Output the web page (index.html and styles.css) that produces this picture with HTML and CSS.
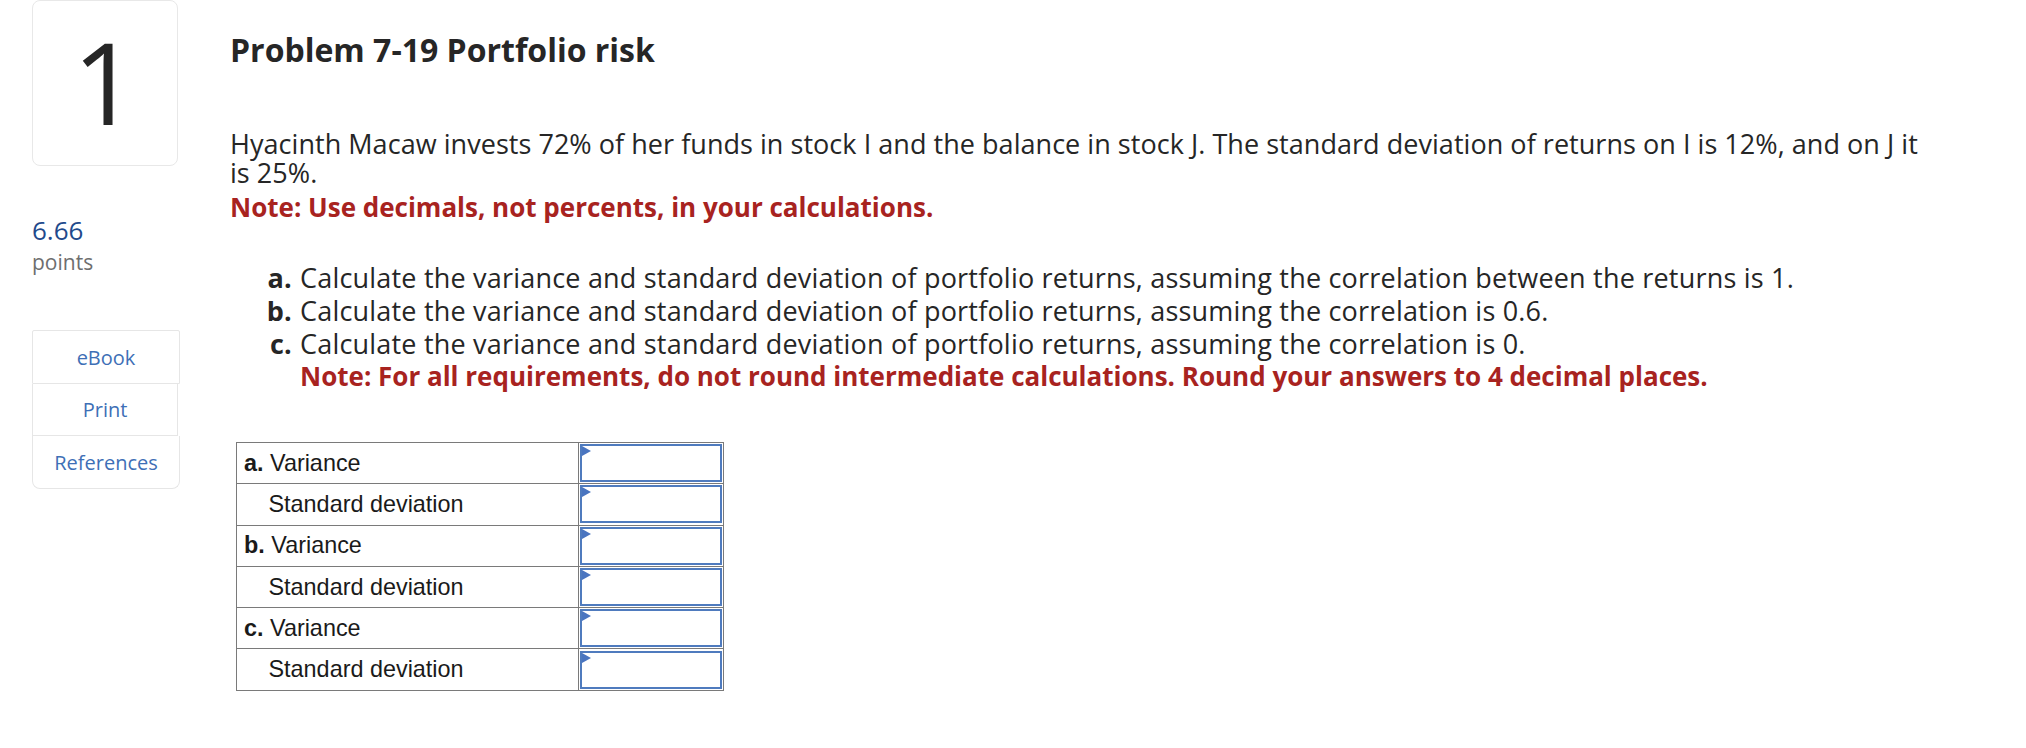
FILE: index.html
```html
<!DOCTYPE html>
<html lang="en">
<head>
<meta charset="utf-8">
<title>Problem 7-19 Portfolio risk</title>
<link rel="stylesheet" href="styles.css">
</head>
<body>
<div class="page">
  <aside class="side">
    <div class="qnum">1</div>
    <div class="points">
      <div class="points-val">6.66</div>
      <div class="points-lbl">points</div>
    </div>
    <nav class="tools">
      <a class="tool tool-first">eBook</a>
      <a class="tool tool-mid">Print</a>
      <a class="tool tool-last">References</a>
    </nav>
  </aside>
  <main class="main">
    <h1 class="title">Problem 7-19 Portfolio risk</h1>
    <p class="intro">Hyacinth Macaw invests 72% of her funds in stock I and the balance in stock J. The standard deviation of returns on I is 12%, and on J it<br>is 25%.</p>
    <p class="note note-block">Note: Use decimals, not percents, in your calculations.</p>
    <ol class="reqs">
      <li><b class="lbl">a.</b><span>Calculate the variance and standard deviation of portfolio returns, assuming the correlation between the returns is 1.</span></li>
      <li><b class="lbl">b.</b><span>Calculate the variance and standard deviation of portfolio returns, assuming the correlation is 0.6.</span></li>
      <li><b class="lbl">c.</b><span>Calculate the variance and standard deviation of portfolio returns, assuming the correlation is 0.</span></li>
      <li><span class="lbl"></span><strong class="note">Note: For all requirements, do not round intermediate calculations. Round your answers to 4 decimal places.</strong></li>
    </ol>
    <table class="answers">
      <tr><td class="cell-lbl"><b>a.</b> Variance</td><td class="cell-in"><div class="inbox"></div></td></tr>
      <tr><td class="cell-lbl indent">Standard deviation</td><td class="cell-in"><div class="inbox"></div></td></tr>
      <tr><td class="cell-lbl"><b>b.</b> Variance</td><td class="cell-in"><div class="inbox"></div></td></tr>
      <tr><td class="cell-lbl indent">Standard deviation</td><td class="cell-in"><div class="inbox"></div></td></tr>
      <tr><td class="cell-lbl"><b>c.</b> Variance</td><td class="cell-in"><div class="inbox"></div></td></tr>
      <tr><td class="cell-lbl indent">Standard deviation</td><td class="cell-in"><div class="inbox"></div></td></tr>
    </table>
  </main>
</div>
</body>
</html>
```

FILE: styles.css
```css
* { box-sizing: border-box; }
html, body { margin: 0; padding: 0; background: #fff; }
body {
  font-family: "Open Sans", "Liberation Sans", sans-serif;
  color: #262626;
  width: 2026px;
  height: 748px;
  overflow: hidden;
}
.page {
  display: flex;
  gap: 50px;
  padding-left: 32px;
}
.side {
  width: 148px;
  flex: none;
  display: flex;
  flex-direction: column;
}
.qnum {
  width: 146px;
  height: 166px;
  border: 1px solid #e8e8e8;
  border-radius: 8px;
  display: flex;
  align-items: center;
  justify-content: center;
  font-family: "Open Sans", sans-serif;
  font-weight: 500;
  font-size: 114px;
  line-height: 1.3;
  color: #262626;
  padding-bottom: 4px;
}
.points { margin-top: 48px; }
.points-val {
  font-size: 26px;
  line-height: 32px;
  color: #1f4a8c;
}
.points-lbl {
  margin-top: 3px;
  font-size: 21px;
  line-height: 26px;
  color: #6e6e6e;
}
.tools {
  margin-top: 55px;
  display: flex;
  flex-direction: column;
}
.tool {
  display: flex;
  align-items: center;
  justify-content: center;
  height: 52px;
  border: 1px solid #e6e6e6;
  border-top: none;
  font-size: 20px;
  color: #3e6fb6;
  width: 148px;
}
.tool-first { border-top: 1px solid #e6e6e6; height: 54px; border-radius: 2px 2px 0 0; }
.tool-mid { width: 146px; }
.tool-last { height: 53px; border-radius: 0 0 8px 8px; }
.main {
  flex: 1;
  min-width: 0;
}
.title {
  margin: 28px 0 0 0;
  font-size: 32px;
  line-height: 44px;
  font-weight: 700;
  color: #262626;
}
.intro {
  margin: 57px 0 0 0;
  font-size: 27px;
  line-height: 29px;
  letter-spacing: 0.04px;
  white-space: nowrap;
}
.note {
  color: #a8231f;
  font-weight: 700;
  font-size: 26px;
  letter-spacing: 0;
}
.note-block {
  margin: 4px 0 0 0;
  line-height: 32px;
  white-space: nowrap;
}
.reqs {
  list-style: none;
  margin: 38px 0 0 0;
  padding: 0;
  font-size: 27px;
  line-height: 33px;
  letter-spacing: 0.2px;
}
.reqs li {
  display: grid;
  grid-template-columns: 62px 1fr;
  column-gap: 8px;
  white-space: nowrap;
}
.reqs .lbl { justify-self: end; font-weight: 700; }
.answers {
  margin: 49px 0 0 6px;
  border-collapse: collapse;
  font-family: "Liberation Sans", Arial, sans-serif;
  font-size: 23.4px;
  color: #1a1a1a;
}
.answers td {
  border: 1px solid #7a7a7a;
  height: 41.3px;
  padding: 0;
}
.cell-lbl {
  width: 342px;
  padding: 0 7px !important;
}
.cell-lbl.indent { padding-left: 31.5px !important; }
.cell-in {
  width: 145px;
}
.inbox {
  position: relative;
  margin: 1px;
  height: 38px;
  border: 2px solid #4f7bbe;
}
.inbox::before {
  content: "";
  position: absolute;
  left: 0;
  top: 0;
  border-left: 9px solid #4a75c0;
  border-top: 5px solid transparent;
  border-bottom: 5px solid transparent;
}
```
